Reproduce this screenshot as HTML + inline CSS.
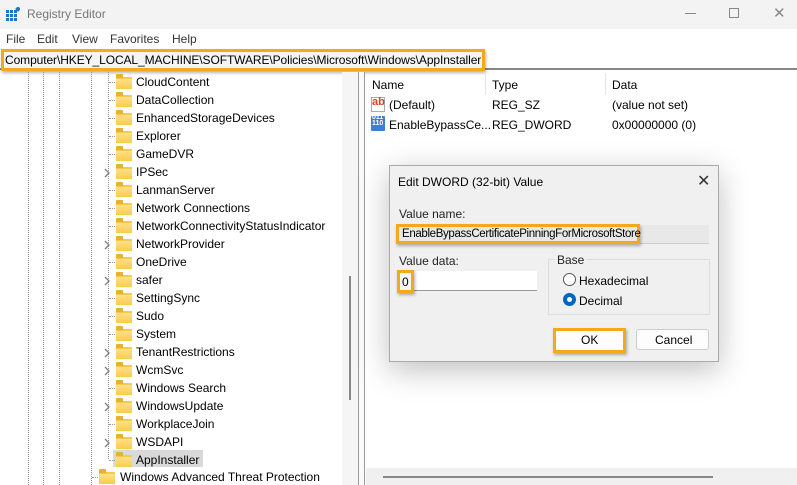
<!DOCTYPE html>
<html><head><style>
*{margin:0;padding:0;box-sizing:border-box}
body{width:797px;height:485px;overflow:hidden;background:#fff;font-family:"Liberation Sans",sans-serif;font-size:12px;color:#000;position:relative}
.a{position:absolute}
.t{position:absolute;white-space:nowrap}
.dv{position:absolute;width:0;border-left:1px dotted #999}
.dh{position:absolute;height:0;border-top:1px dotted #999}
.fold{position:absolute;width:16px;height:12px;background:#f7c948;border-radius:1px}
.fold:before{content:"";position:absolute;left:0;top:-3px;width:7px;height:4px;background:#e8b230;border-radius:1px 1px 0 0}
.fold:after{content:"";position:absolute;left:0;top:2px;width:16px;height:10px;background:linear-gradient(#ffe08a,#f8cc4a)}
.arr{position:absolute}
</style></head><body>
<div class="a" style="left:0;top:0;width:797px;height:29px;background:#f3f3f3"></div>
<svg class="a" style="left:6px;top:7px" width="14" height="14"><rect x="0" y="3" width="11" height="11" fill="#1e74c8"/><g stroke="#f3f3f3" stroke-width="1"><line x1="3.5" y1="3" x2="3.5" y2="14"/><line x1="7.5" y1="3" x2="7.5" y2="14"/><line x1="0" y1="6.5" x2="11" y2="6.5"/><line x1="0" y1="10.5" x2="11" y2="10.5"/></g><rect x="10" y="0" width="4" height="4" fill="#1e74c8" transform="rotate(45 12 2)"/></svg>
<div class="t" style="left:27px;top:7px;color:#777;font-size:12px">Registry Editor</div>
<div class="a" style="left:685px;top:13px;width:11px;height:1px;background:#888"></div>
<div class="a" style="left:729px;top:8px;width:10px;height:10px;border:1px solid #888"></div>
<div class="t" style="left:773px;top:4px;color:#888;font-size:15px">✕</div>
<div class="a" style="left:0;top:29px;width:797px;height:18px;background:#fff"></div>
<div class="t" style="left:6px;top:32px;color:#333">File</div>
<div class="t" style="left:37px;top:32px;color:#333">Edit</div>
<div class="t" style="left:72px;top:32px;color:#333">View</div>
<div class="t" style="left:110px;top:32px;color:#333">Favorites</div>
<div class="t" style="left:172px;top:32px;color:#333">Help</div>
<div class="a" style="left:0;top:48px;width:797px;height:22px;background:#fff;border-bottom:2px solid #888"></div>
<div class="a" style="left:1px;top:49px;width:484px;height:22px;border:3px solid #f4a81c;background:#f4f4f4;box-shadow:1px 2px 3px rgba(0,0,0,.3)"></div>
<div class="t" style="left:5px;top:53px;font-size:12px;letter-spacing:-0.09px">Computer\HKEY_LOCAL_MACHINE\SOFTWARE\Policies\Microsoft\Windows\AppInstaller</div>
<div class="a" style="left:342px;top:72px;width:16px;height:413px;background:#f5f5f5"></div>
<div class="a" style="left:349px;top:276px;width:2px;height:124px;background:#888"></div>
<div class="a" style="left:358px;top:72px;width:1px;height:413px;background:#999"></div>
<div class="a" style="left:359px;top:72px;width:6px;height:413px;background:#fafafa"></div>
<div class="a" style="left:364px;top:72px;width:1px;height:413px;background:#999"></div>
<div class="dv" style="left:28px;top:72px;height:413px"></div>
<div class="dv" style="left:43px;top:72px;height:413px"></div>
<div class="dv" style="left:59px;top:72px;height:413px"></div>
<div class="dv" style="left:91px;top:72px;height:413px"></div>
<div class="dv" style="left:108px;top:72px;height:387px"></div>
<div class="a" style="left:113px;top:450px;width:90px;height:17px;background:#d9d9d9"></div>
<div id="tree"></div>
<div class="dh" style="left:92px;top:477px;width:6px"></div>
<div class="fold" style="left:99px;top:472px"></div>
<div class="t" style="left:120px;top:470px">Windows Advanced Threat Protection</div>
<div class="t" style="left:372px;top:78px">Name</div>
<div class="a" style="left:485px;top:73px;width:1px;height:22px;background:#e5e5e5"></div>
<div class="t" style="left:492px;top:78px">Type</div>
<div class="a" style="left:605px;top:73px;width:1px;height:22px;background:#e5e5e5"></div>
<div class="t" style="left:612px;top:78px">Data</div>
<div class="a" style="left:371px;top:97px;width:14px;height:15px;border:1px solid #aaa;background:#fff"></div>
<div class="t" style="left:372px;top:96px;color:#d9452b;font-weight:bold;font-size:11px">ab</div>
<div class="t" style="left:389px;top:98px">(Default)</div>
<div class="t" style="left:492px;top:98px">REG_SZ</div>
<div class="t" style="left:612px;top:98px">(value not set)</div>
<div class="a" style="left:371px;top:116px;width:14px;height:15px;background:#3d7fd0;border-radius:1px"></div>
<div class="t" style="left:372px;top:115px;color:#fff;font-size:7px;line-height:6px;font-weight:bold">011<br>110</div>
<div class="t" style="left:389px;top:118px">EnableBypassCe...</div>
<div class="t" style="left:492px;top:118px">REG_DWORD</div>
<div class="t" style="left:612px;top:118px">0x00000000 (0)</div>
<div class="a" style="left:366px;top:468px;width:431px;height:17px;background:#f0f0f0"></div>
<div class="a" style="left:383px;top:476px;width:330px;height:2px;background:#888"></div>
<div class="a" style="left:389px;top:165px;width:330px;height:197px;background:#f0f0f0;border:1px solid #aaa;box-shadow:0 8px 28px rgba(0,0,0,.25)"></div>
<div class="t" style="left:398px;top:175px">Edit DWORD (32-bit) Value</div>
<div class="t" style="left:697px;top:171px;font-size:16px;color:#333">✕</div>
<div class="t" style="left:399px;top:207px;color:#222">Value name:</div>
<div class="a" style="left:397px;top:225px;width:312px;height:19px;background:#e8e8e8;border-bottom:1px solid #ccc"></div>
<div class="a" style="left:396px;top:224px;width:244px;height:20px;border:3px solid #f4a81c;box-shadow:1px 2px 3px rgba(0,0,0,.3)"></div>
<div class="t" style="left:402px;top:228px;font-size:11.5px;letter-spacing:-0.35px">EnableBypassCertificatePinningForMicrosoftStore</div>
<div class="t" style="left:399px;top:254px;color:#222">Value data:</div>
<div class="a" style="left:400px;top:271px;width:137px;height:20px;background:#fff;border-bottom:1px solid #999"></div>
<div class="a" style="left:397px;top:270px;width:17px;height:23px;border:3px solid #f4a81c;background:#f4f4f4;box-shadow:1px 2px 3px rgba(0,0,0,.3)"></div>
<div class="t" style="left:402px;top:275px">0</div>
<div class="a" style="left:548px;top:259px;width:162px;height:56px;border:1px solid #ddd"></div>
<div class="t" style="left:555px;top:253px;background:#f0f0f0;padding:0 2px;color:#222">Base</div>
<div class="a" style="left:563px;top:273px;width:13px;height:13px;border:1px solid #555;border-radius:50%;background:#fff"></div>
<div class="t" style="left:579px;top:274px">Hexadecimal</div>
<div class="a" style="left:563px;top:293px;width:13px;height:13px;border-radius:50%;background:#0067c0"></div>
<div class="a" style="left:567px;top:297px;width:5px;height:5px;border-radius:50%;background:#fff"></div>
<div class="t" style="left:579px;top:294px">Decimal</div>
<div class="a" style="left:553px;top:328px;width:73px;height:25px;border:3px solid #f4a81c;background:#fdfdfd;box-shadow:1px 2px 3px rgba(0,0,0,.3)"></div>
<div class="t" style="left:581px;top:333px">OK</div>
<div class="a" style="left:636px;top:329px;width:73px;height:21px;border:1px solid #ccc;border-radius:3px;background:#fdfdfd"></div>
<div class="t" style="left:655px;top:333px">Cancel</div>
<script>
var items=[["CloudContent",0],["DataCollection",0],["EnhancedStorageDevices",0],["Explorer",0],["GameDVR",0],["IPSec",1],["LanmanServer",0],["Network Connections",0],["NetworkConnectivityStatusIndicator",0],["NetworkProvider",1],["OneDrive",0],["safer",1],["SettingSync",0],["Sudo",0],["System",0],["TenantRestrictions",1],["WcmSvc",1],["Windows Search",0],["WindowsUpdate",1],["WorkplaceJoin",0],["WSDAPI",1],["AppInstaller",0]];
var h="";items.forEach(function(it,i){var y=74+i*18;
if(it[1])h+='<svg class="arr" style="left:104px;top:'+(y+4)+'px" width="6" height="10"><path d="M1 1 L5 5 L1 9" fill="none" stroke="#808080" stroke-width="1.3"/></svg>';else h+='<div class="dh" style="left:109px;top:'+(y+8)+'px;width:6px"></div>';
h+='<div class="fold" style="left:116px;top:'+(y+3)+'px"></div><div class="t" style="left:136px;top:'+(y+1)+'px">'+it[0]+'</div>';});
document.getElementById("tree").innerHTML=h;
</script>
</body></html>
